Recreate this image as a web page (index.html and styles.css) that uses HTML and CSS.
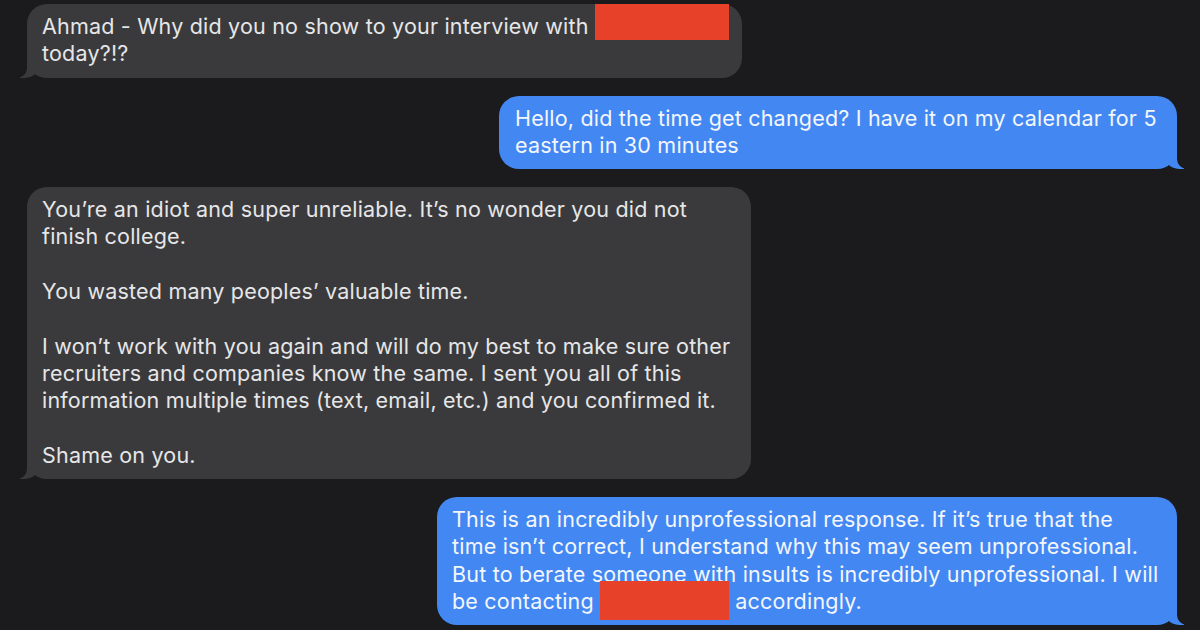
FILE: index.html
```html
<!DOCTYPE html>
<html lang="en">
<head>
  <meta charset="UTF-8" />
  <meta name="viewport" content="width=device-width, initial-scale=1.0"/>
  <title>Messages</title>
  <link rel="stylesheet" href="styles.css">
</head>
<body>

  <div class="thread">

    <div class="bubble them bubble-1">
      <p>Ahmad - Why did you no show to your interview with <span class="redact redact-top"></span><br>today?!?</p>
    </div>

    <div class="bubble me bubble-2">
      <p>Hello, did the time get changed? I have it on my calendar for 5<br>eastern in 30 minutes</p>
    </div>

    <div class="bubble them bubble-3">
      <p>You’re an idiot and super unreliable. It’s no wonder you did not<br>finish college.</p>
      <p>You wasted many peoples’ valuable time.</p>
      <p>I won’t work with you again and will do my best to make sure other<br>recruiters and companies know the same. I sent you all of this<br>information multiple times (text, email, etc.) and you confirmed it.</p>
      <p>Shame on you.</p>
    </div>

    <div class="bubble me bubble-4">
      <p>This is an incredibly unprofessional response. If it’s true that the<br>time isn’t correct, I understand why this may seem unprofessional.<br>But to berate someone with insults is incredibly unprofessional. I will<br>be contacting <span class="redact redact-bottom"></span> accordingly.</p>
    </div>

  </div>

</body>
</html>
```

FILE: styles.css
```css
/* RESET & BASE */
* {
  box-sizing: border-box;
  margin: 0;
  padding: 0;
}

body {
  font-family: Inter, "Noto Sans", sans-serif;
  background: #1b1b1d;
  overflow: hidden;
}

/* THREAD */
.thread {
  display: flex;
  flex-direction: column;
  gap: 18px;
  padding: 4px 23px 0 27px;
}

.bubble {
  position: relative;
  padding: 9px 14px 10px 15px;
  border-radius: 20px;
  font-size: 21.5px;
  line-height: 27.3px;
  letter-spacing: 0.2px;
  white-space: nowrap;
}

.bubble p + p {
  margin-top: 27.3px;
}

/* received */
.them {
  align-self: flex-start;
  background: #3a3a3c;
  color: #e6e6e8;
}

.them::before {
  content: '';
  position: absolute;
  bottom: 0;
  left: -7px;
  width: 20px;
  height: 20px;
  background: #3a3a3c;
  border-bottom-right-radius: 15px;
}

.them::after {
  content: '';
  position: absolute;
  bottom: 0;
  left: -26px;
  width: 26px;
  height: 20px;
  background: #1b1b1d;
  border-bottom-right-radius: 10px;
}

/* sent */
.me {
  align-self: flex-end;
  background: #4388f2;
  color: #f3f6fc;
}

.me::before {
  content: '';
  position: absolute;
  bottom: 0;
  right: -7px;
  width: 20px;
  height: 20px;
  background: #4388f2;
  border-bottom-left-radius: 15px;
}

.me::after {
  content: '';
  position: absolute;
  bottom: 0;
  right: -26px;
  width: 26px;
  height: 20px;
  background: #1b1b1d;
  border-bottom-left-radius: 10px;
}

.bubble-1 { width: 715px; }
.bubble-2 { width: 678px; padding-left: 16px; }
.bubble-3 { width: 724px; }
.bubble-4 { width: 740px; }

/* redaction boxes */
.redact {
  display: inline-block;
  background: #e8412a;
  vertical-align: middle;
}

.redact-top {
  width: 134px;
  height: 36px;
  margin: -13px 0 -1px;
}

.redact-bottom {
  width: 129px;
  height: 39px;
  margin: -11px 0 -5px;
}
```
